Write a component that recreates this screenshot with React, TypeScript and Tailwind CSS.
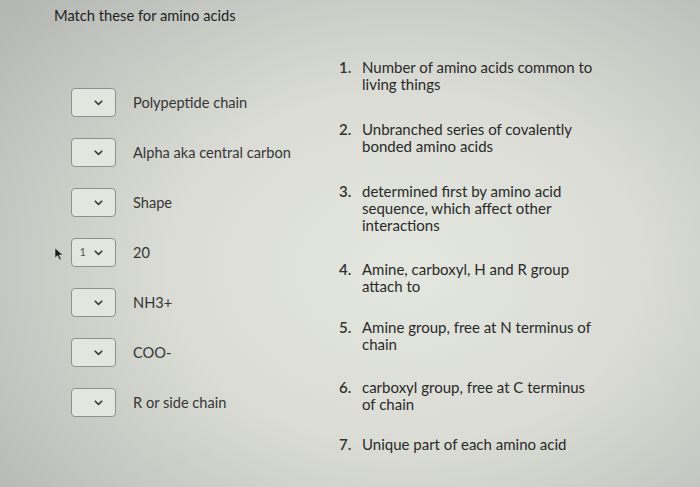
import React from "react";

const prompts = [
  { label: "Polypeptide chain", value: "" },
  { label: "Alpha aka central carbon", value: "" },
  { label: "Shape", value: "" },
  { label: "20", value: "1" },
  { label: "NH3+", value: "" },
  { label: "COO-", value: "" },
  { label: "R or side chain", value: "" },
];

const answers: { lines: string[]; gap: string }[] = [
  { lines: ["Number of amino acids common to", "living things"], gap: "mt-0" },
  { lines: ["Unbranched series of covalently", "bonded amino acids"], gap: "mt-[28px]" },
  { lines: ["determined first by amino acid", "sequence, which affect other", "interactions"], gap: "mt-[28px]" },
  { lines: ["Amine, carboxyl, H and R group", "attach to"], gap: "mt-[27px]" },
  { lines: ["Amine group, free at N terminus of", "chain"], gap: "mt-[24px]" },
  { lines: ["carboxyl group, free at C terminus", "of chain"], gap: "mt-[26px]" },
  { lines: ["Unique part of each amino acid"], gap: "mt-[23px]" },
];

function Chevron() {
  return (
    <svg width="9" height="6" viewBox="0 0 9 6" className="shrink-0">
      <path d="M1.2 1.2 L4.5 4.4 L7.8 1.2" fill="none" stroke="#3a3a3a" strokeWidth="1.6" strokeLinecap="round" strokeLinejoin="round" />
    </svg>
  );
}

function Pointer() {
  return (
    <svg width="10" height="14" viewBox="0 0 10 14" className="absolute left-[-17px] top-[9px]">
      <path d="M1 1 L1 11 L3.6 8.6 L5.6 13 L7.2 12.3 L5.3 8 L8.8 8 Z" fill="#1b1b1b" stroke="#d8d8d8" strokeWidth="0.6" />
    </svg>
  );
}

export default function App() {
  return (
    <div
      className="relative h-[487px] w-[700px] overflow-hidden text-[#2f2f2f] bg-[radial-gradient(ellipse_75%_80%_at_58%_55%,#e4e7df_0%,#dadcd5_45%,#c3c5c0_80%,#b5b7b2_100%)]"
      style={{ fontFamily: "Lato, 'Open Sans', sans-serif" }}
    >
      <h1 className="pl-[54px] pt-[5px] text-[14.7px] leading-5 font-normal text-[#242424]">
        Match these for amino acids
      </h1>

      <div className="flex">
        {/* prompts with answer selects */}
        <div className="ml-[71px] mt-[63px] flex w-[240px] flex-col gap-[21px]">
          {prompts.map((p) => (
            <div key={p.label} className="relative flex items-center gap-[17px]">
              {p.value && <Pointer />}
              <div className="flex h-[29px] w-[45px] items-center justify-end gap-[8px] rounded-[4px] border border-[#8f918d] bg-[#e3e5df] pr-[12px]">
                {p.value && <span className="text-[11px] text-[#555]">{p.value}</span>}
                <Chevron />
              </div>
              <span className="text-[14.6px] leading-4 text-[#363636]">{p.label}</span>
            </div>
          ))}
        </div>

        {/* numbered answer list */}
        <ol className="ml-[28px] mt-[34px] flex flex-col">
          {answers.map((a, i) => (
            <li key={i} className={`flex text-[15px] leading-[17px] ${a.gap}`}>
              <span className="w-[23px] shrink-0 font-semibold text-[#333]">{i + 1}.</span>
              <span className="text-[#2a2a2a]">
                {a.lines.map((l) => (
                  <span key={l} className="block whitespace-nowrap">
                    {l}
                  </span>
                ))}
              </span>
            </li>
          ))}
        </ol>
      </div>
    </div>
  );
}
